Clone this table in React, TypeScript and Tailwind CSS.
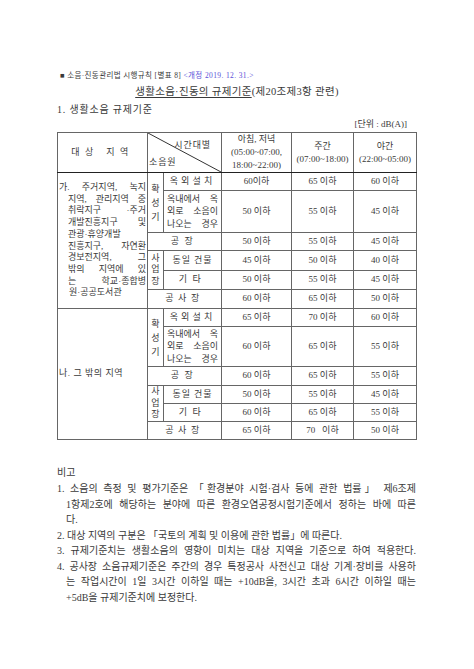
const serif = "font-['Liberation_Serif','Noto_Sans_CJK_KR',serif]"

const groupA: string[][] = [
  ["60이하", "65 이하", "60 이하"],
  ["50 이하", "55 이하", "45 이하"],
  ["50 이하", "55 이하", "45 이하"],
  ["45 이하", "50 이하", "40 이하"],
  ["50 이하", "55 이하", "45 이하"],
  ["60 이하", "65 이하", "50 이하"],
]

const groupB: string[][] = [
  ["65 이하", "70 이하", "60 이하"],
  ["60 이하", "65 이하", "55 이하"],
  ["60 이하", "65 이하", "55 이하"],
  ["50 이하", "55 이하", "45 이하"],
  ["60 이하", "65 이하", "55 이하"],
  ["65 이하", "70\u00a0\u00a0 이하", "50 이하"],
]

const areaA = [
  "가. 주거지역, 녹지",
  "지역, 관리지역 중",
  "취락지구 ·주거",
  "개발진흥지구 및",
  "관광·휴양개발",
  "진흥지구, 자연환",
  "경보전지역, 그",
  "밖의 지역에 있",
  "는 학교·종합병",
]

const cell = "border border-[#666] p-0 text-center align-middle"

function Stack({ chars, tight }: { chars: string[]; tight?: boolean }) {
  return (
    <div className={`flex flex-col items-center ${tight ? "leading-[11.5px]" : "leading-[14px]"}`}>
      {chars.map((c) => (
        <span key={c}>{c}</span>
      ))}
    </div>
  )
}

function Vals({ vals, top }: { vals: string[]; top?: boolean }) {
  return (
    <>
      {vals.map((v, i) => (
        <td key={i} className={`${cell} ${top ? "border-t-[1.5px] border-t-[#222]" : ""}`}>
          {v}
        </td>
      ))}
    </>
  )
}

function Indoor() {
  return (
    <div className="px-[3px] leading-[12.5px]">
      <div className="text-justify [text-align-last:justify]">옥내에서 옥</div>
      <div className="text-justify [text-align-last:justify]">외로 소음이</div>
      <div className="text-justify [text-align-last:justify]">나오는 경우</div>
    </div>
  )
}

function Group({ data, first }: { data: string[][]; first: "a" | "b" }) {
  const heights = first === "a" ? [18, 42, 18, 20, 19, 19] : [18, 40, 19, 18, 18, 18]
  const top = first === "b"
  const sep = top ? "border-t-[1.5px] border-t-[#222]" : ""
  return (
    <>
      <tr style={{ height: heights[0] }}>
        <td rowSpan={6} className={`${cell} ${sep} text-left px-[1px]`}>
          {first === "a" ? (
            <div className="leading-[11.7px]">
              {areaA.map((l, i) => (
                <div key={i} className={`text-justify [text-align-last:justify] ${i > 0 ? "pl-[9px]" : ""}`}>
                  {l}
                </div>
              ))}
              <div className="pl-[10px]">원·공공도서관</div>
            </div>
          ) : (
            <div className="tracking-[0.06em]">나. 그 밖의 지역</div>
          )}
        </td>
        <td rowSpan={2} className={`${cell} ${sep}`}>
          <Stack chars={["확", "성", "기"]} />
        </td>
        <td className={`${cell} ${sep} tracking-[0.35em]`}>옥외설치</td>
        <Vals vals={data[0]} top={top} />
      </tr>
      <tr style={{ height: heights[1] }}>
        <td className={`${cell} text-left`}>
          <Indoor />
        </td>
        <Vals vals={data[1]} />
      </tr>
      <tr style={{ height: heights[2] }}>
        <td colSpan={2} className={`${cell} tracking-[0.6em]`}>
          공장
        </td>
        <Vals vals={data[2]} />
      </tr>
      <tr style={{ height: heights[3] }}>
        <td rowSpan={2} className={cell}>
          <Stack chars={["사", "업", "장"]} tight />
        </td>
        <td className={`${cell} tracking-[0.1em]`}>동일 건물</td>
        <Vals vals={data[3]} />
      </tr>
      <tr style={{ height: heights[4] }}>
        <td className={`${cell} tracking-[0.6em]`}>기타</td>
        <Vals vals={data[4]} />
      </tr>
      <tr style={{ height: heights[5] }}>
        <td colSpan={2} className={`${cell} tracking-[0.5em]`}>
          공사장
        </td>
        <Vals vals={data[5]} />
      </tr>
    </>
  )
}

const notes: { text: string; indent?: boolean; justify?: boolean }[] = [
  { text: "1. 소음의 측정 및 평가기준은 「환경분야 시험·검사 등에 관한 법률」 제6조제", justify: true },
  { text: "1항제2호에 해당하는 분야에 따른 환경오염공정시험기준에서 정하는 바에 따른", indent: true, justify: true },
  { text: "다.", indent: true },
  { text: "2. 대상 지역의 구분은 「국토의 계획 및 이용에 관한 법률」에 따른다." },
  { text: "3. 규제기준치는 생활소음의 영향이 미치는 대상 지역을 기준으로 하여 적용한다.", justify: true },
  { text: "4. 공사장 소음규제기준은 주간의 경우 특정공사 사전신고 대상 기계·장비를 사용하", justify: true },
  { text: "는 작업시간이 1일 3시간 이하일 때는 +10dB을, 3시간 초과 6시간 이하일 때는", indent: true, justify: true },
  { text: "+5dB을 규제기준치에 보정한다.", indent: true },
]

export default function App() {
  return (
    <div className={`w-[474px] h-[669px] bg-white text-[#3a3a3a] ${serif}`}>
      <div className="pl-[60px] pt-[70px] text-[7.5px] leading-[12px] tracking-[0.05em]">
        ■ 소음·진동관리법 시행규칙 [별표 8]{" "}
        <span className="text-[#5b50d8]">&lt;개정 2019. 12. 31.&gt;</span>
      </div>

      <div className="mt-[2px] text-center text-[10.5px] leading-[16px] tracking-[0.03em]">
        <span className="underline underline-offset-2">생활소음·진동의 규제기준</span>(제20조제3항 관련)
      </div>

      <div className="mt-[3px] pl-[57px] text-[10px] leading-[14px] tracking-[0.08em]">1. 생활소음 규제기준</div>

      <div className="mt-[1px] pr-[67px] text-right text-[9px] leading-[12px]">[단위 : dB(A)]</div>

      <table className="mt-[2px] ml-[57px] w-[359px] table-fixed border-collapse border-[1.5px] border-[#222] text-[9px]">
        <colgroup>
          <col className="w-[90px]" />
          <col className="w-[16px]" />
          <col className="w-[58px]" />
          <col className="w-[70px]" />
          <col className="w-[62px]" />
          <col className="w-[63px]" />
        </colgroup>
        <tbody>
          <tr className="h-[38px]">
            <td className={`${cell} border-b-[1.5px] border-b-[#222] tracking-[0.6em]`}>대상 지역</td>
            <td colSpan={2} className={`${cell} border-b-[1.5px] border-b-[#222] relative`}>
              <svg className="absolute inset-0 w-full h-full" viewBox="0 0 100 100" preserveAspectRatio="none">
                <line x1="0" y1="0" x2="100" y2="100" stroke="#333" strokeWidth="1" vectorEffect="non-scaling-stroke" />
              </svg>
              <div className="flex flex-col h-[38px] justify-between pt-[5px] pb-[4px] leading-[12px]">
                <div className="text-right pr-[10px] tracking-[0.1em]">시간대별</div>
                <div className="text-left pl-[1px] tracking-[0.1em]">소음원</div>
              </div>
            </td>
            <td className={`${cell} border-b-[1.5px] border-b-[#222] leading-[13px]`}>
              <div>아침, 저녁</div>
              <div>(05:00~07:00,</div>
              <div>18:00~22:00)</div>
            </td>
            <td className={`${cell} border-b-[1.5px] border-b-[#222] leading-[13px]`}>
              <div>주간</div>
              <div>(07:00~18:00)</div>
            </td>
            <td className={`${cell} border-b-[1.5px] border-b-[#222] leading-[13px]`}>
              <div>야간</div>
              <div>(22:00~05:00)</div>
            </td>
          </tr>
          <Group data={groupA} first="a" />
          <Group data={groupB} first="b" />
        </tbody>
      </table>

      <div className="mt-[26px] pl-[57px] text-[10px] leading-[14px]">비고</div>

      <div className="mt-[1px] ml-[57px] w-[359px] text-[10px] leading-[15.5px]">
        {notes.map((n, i) => (
          <div
            key={i}
            className={`${n.indent ? "pl-[9px]" : ""} ${n.justify ? "text-justify [text-align-last:justify]" : ""} whitespace-nowrap`}
          >
            {n.text}
          </div>
        ))}
      </div>
    </div>
  )
}
